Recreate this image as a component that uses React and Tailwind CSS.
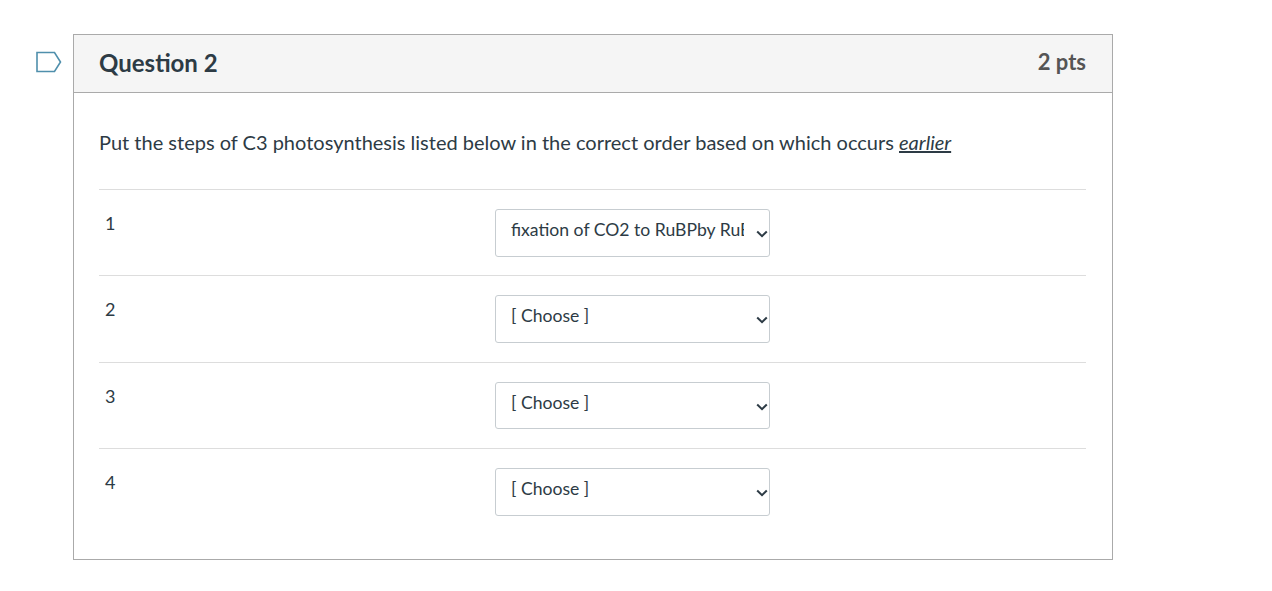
const steps = [
    { num: 1, value: "fixation of CO2 to RuBPby RuBisCO" },
    { num: 2, value: "[ Choose ]" },
    { num: 3, value: "[ Choose ]" },
    { num: 4, value: "[ Choose ]" },
];

const options = ["[ Choose ]", "fixation of CO2 to RuBPby RuBisCO"];

const App = () => {
    return (
        <div className="w-[1272px] h-[591px] bg-white overflow-hidden font-['Lato',sans-serif] text-[#2d3b45]">
            <div className="flex items-start pt-[34px] pl-9">
                <svg width="26" height="22" viewBox="0 0 26 22" className="mt-[17px] mr-[11px]" fill="none">
                    <path d="M1 1.5H18.5L24.5 11L18.5 20.5H1Z" stroke="#4f8fac" strokeWidth="1.6" />
                </svg>
                <div className="w-[1040px] h-[526px] border border-[#aaaaaa]">
                    <div className="flex items-center justify-between h-[58px] pl-[25px] pr-[26px] pb-px bg-[#f5f5f5] border-b border-[#aaaaaa]">
                        <h2 className="text-2xl font-bold leading-none">Question 2</h2>
                        <span className="text-[22px] font-bold text-[#555555] leading-none -mt-[3px]">2 pts</span>
                    </div>
                    <div className="pl-[25px] pr-[26px]">
                        <p className="pt-[36px] pb-[34px] text-xl leading-[26px]">
                            Put the steps of C3 photosynthesis listed below in the correct order based on which occurs{" "}
                            <em className="underline">earlier</em>
                        </p>
                        {steps.map((step) => (
                            <div key={step.num} className="flex h-[86.4px] border-t border-[#dddddd] pt-[19px]">
                                <div className="w-[396px] pl-[6px] pt-[2px] text-lg leading-6">{step.num}</div>
                                <div className="relative w-[275px] h-[47.5px]">
                                    <select
                                        defaultValue={step.value}
                                        className="w-full h-full pl-[15px] pr-[25px] pb-[5px] bg-white border border-[#c7cdd1] rounded-[3px] text-[17.6px] appearance-none"
                                    >
                                        {options.map((opt) => (
                                            <option key={opt}>{opt}</option>
                                        ))}
                                    </select>
                                    <svg
                                        width="12"
                                        height="8"
                                        viewBox="0 0 12 8"
                                        fill="none"
                                        className="absolute right-[2px] top-[21px] pointer-events-none"
                                    >
                                        <path d="M1.2 1.5L6 6.2L10.8 1.5" stroke="#2d3b45" strokeWidth="2" />
                                    </svg>
                                </div>
                            </div>
                        ))}
                    </div>
                </div>
            </div>
        </div>
    );
};

export default App;
